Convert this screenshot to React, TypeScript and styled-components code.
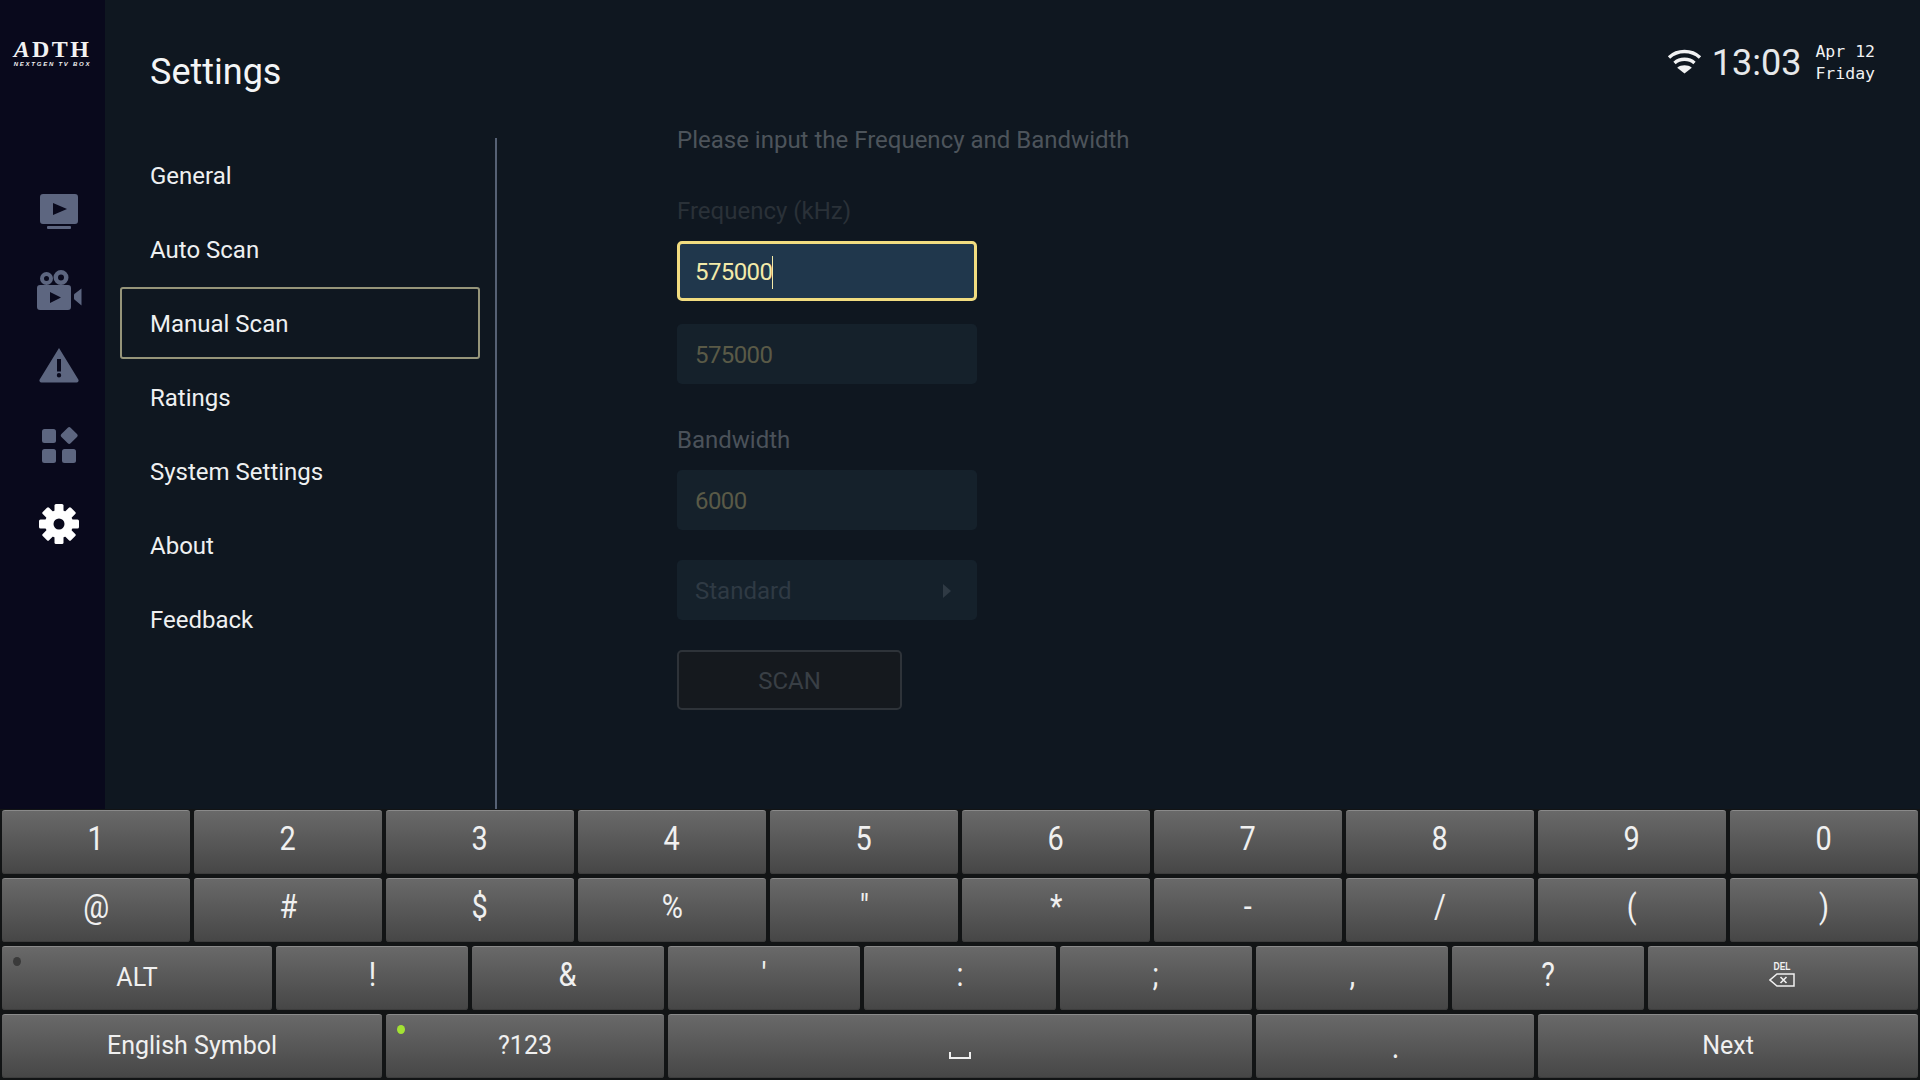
import React from "react";
import styled, { createGlobalStyle } from "styled-components";

const GlobalStyle = createGlobalStyle`
  html, body {
    margin: 0;
    padding: 0;
    background: #0f1720;
  }
  * {
    box-sizing: border-box;
  }
`;

const Page = styled.div`
  width: 1920px;
  height: 1080px;
  display: flex;
  flex-direction: column;
  overflow: hidden;
  background: #0f1720;
  font-family: Roboto, "Noto Sans", sans-serif;
`;

const Upper = styled.div`
  flex: 1;
  display: flex;
  min-height: 0;
`;

const Rail = styled.div`
  width: 105px;
  flex-shrink: 0;
  background: #09091c;
  padding-top: 41px;
  display: flex;
  flex-direction: column;
  align-items: center;
`;

const Logo = styled.div`
  width: 78px;
  margin-bottom: 105px;
  color: #f2f2f2;
  text-align: center;
`;

const LogoMark = styled.div`
  font-family: "Liberation Serif", serif;
  font-weight: 700;
  font-size: 24px;
  line-height: 16px;
  letter-spacing: 2.4px;
  white-space: nowrap;
`;

const LogoSlant = styled.span`
  font-style: italic;
`;

const LogoSub = styled.div`
  margin-top: 5px;
  font-family: "Liberation Sans", sans-serif;
  font-weight: 700;
  font-style: italic;
  font-size: 6px;
  line-height: 5px;
  letter-spacing: 1.75px;
  white-space: nowrap;
`;

const RailIcon = styled.div<{ $active?: boolean; $height: number }>`
  height: ${(p) => p.$height}px;
  width: 105px;
  padding-left: 13px;
  display: flex;
  align-items: center;
  justify-content: center;
  color: ${(p) => (p.$active ? "#ffffff" : "#5d6680")};
`;

const Main = styled.div`
  flex: 1;
  display: flex;
  flex-direction: column;
  min-width: 0;
`;

const Header = styled.div`
  height: 124px;
  flex-shrink: 0;
  padding: 41px 45px 0 45px;
  display: flex;
  justify-content: space-between;
  align-items: flex-start;
`;

const Title = styled.div`
  margin-top: 9px;
  font-size: 36px;
  line-height: 44px;
  color: #f4f5f6;
`;

const Status = styled.div`
  height: 44px;
  display: flex;
  align-items: center;
  color: #f1f2f3;
`;

const StatusWifi = styled.div`
  display: flex;
  margin-top: -5px;
`;

const Clock = styled.div`
  margin-left: 10px;
  font-size: 36px;
  line-height: 44px;
  color: #e6e8ea;
`;

const DateBox = styled.div`
  margin-left: 14px;
  font-family: "DejaVu Sans Mono", monospace;
  font-size: 16.5px;
  line-height: 22px;
`;

const Body = styled.div`
  flex: 1;
  display: flex;
  min-height: 0;
`;

const NavPane = styled.div`
  width: 392px;
  margin-top: 14px;
  padding: 1px 15px 0 15px;
  border-right: 2px solid #566174;
  display: flex;
  flex-direction: column;
  gap: 2px;
`;

const NavItem = styled.div<{ $focused?: boolean }>`
  height: 72px;
  padding: 2px 0 0 28px;
  display: flex;
  align-items: center;
  font-size: 24px;
  color: #eef0f1;
  border: 2px solid ${(p) => (p.$focused ? "#96957a" : "transparent")};
  border-radius: 3px;
`;

const Form = styled.div`
  margin-left: 180px;
  width: 300px;
  display: flex;
  flex-direction: column;
  align-items: flex-start;
`;

const Prompt = styled.div<{ $tone: string; $top: number }>`
  margin-top: ${(p) => p.$top}px;
  font-size: 24px;
  line-height: 32px;
  white-space: nowrap;
  color: ${(p) => p.$tone};
`;

const Field = styled.div<{ $top: number; $focused?: boolean }>`
  margin-top: ${(p) => p.$top}px;
  width: 300px;
  height: 60px;
  padding: 2px ${(p) => (p.$focused ? 15 : 18)}px 0;
  display: flex;
  align-items: center;
  font-size: 24px;
  letter-spacing: -0.6px;
  border-radius: 5px;
  background: ${(p) => (p.$focused ? "#20374c" : "#15212b")};
  border: ${(p) => (p.$focused ? "3px solid #f1dc80" : "none")};
  color: ${(p) => (p.$focused ? "#f3eaa9" : "#5a5a47")};
`;

const Caret = styled.span`
  width: 1px;
  height: 33px;
  background: #f3eaa9;
`;

const Dropdown = styled(Field)`
  justify-content: space-between;
  padding-right: 26px;
  letter-spacing: 0;
  color: #2f3a44;
`;

const ScanButton = styled.div`
  margin-top: 30px;
  width: 225px;
  height: 60px;
  padding-top: 2px;
  display: flex;
  align-items: center;
  justify-content: center;
  font-size: 24px;
  color: #393f45;
  background: #15191e;
  border: 2px solid #2e3339;
  border-radius: 5px;
`;

const Keyboard = styled.div`
  height: 271px;
  flex-shrink: 0;
  background: #121415;
  padding: 1px 2px 0;
  display: flex;
  flex-direction: column;
  gap: 4px;
`;

const KeyRow = styled.div`
  display: flex;
  gap: 4px;
`;

const Key = styled.div<{ $width: number; $lift?: number }>`
  position: relative;
  width: ${(p) => p.$width}px;
  height: 64px;
  flex-shrink: 0;
  padding-bottom: ${(p) => p.$lift ?? 2}px;
  display: flex;
  align-items: center;
  justify-content: center;
  color: #f0f0f0;
  border-radius: 3px;
  background: linear-gradient(#696969, #464646);
  border-top: 1px solid #8a8a8a;
  box-shadow: inset 0 -1px 0 #3d3d3d;
`;

const GlyphLabel = styled.span`
  display: inline-block;
  font-size: 34px;
  line-height: 1;
  white-space: nowrap;
  transform: scaleX(0.85);
`;

const WordLabel = styled.span`
  font-size: 25px;
  line-height: 1;
  white-space: nowrap;
`;

const KeyDot = styled.span<{ $color: string }>`
  position: absolute;
  left: 11px;
  top: 10px;
  width: 8px;
  height: 9px;
  border-radius: 50%;
  background: ${(p) => p.$color};
`;

const SpaceMark = styled.div`
  margin-top: 20px;
  display: flex;
`;

const DelBox = styled.div`
  display: flex;
  flex-direction: column;
  align-items: center;
  color: #f0f0f0;
  margin: 0 2px 6px 0;
`;

const DelText = styled.span`
  font-size: 10px;
  line-height: 11px;
  font-weight: 700;
  font-family: "Liberation Sans", sans-serif;
  transform: scaleX(0.85);
`;

const TvIcon = () => (
  <svg width="38" height="36" viewBox="0 0 38 36">
    <path
      fill="currentColor"
      fillRule="evenodd"
      d="M3 0h32a3 3 0 0 1 3 3v24a3 3 0 0 1-3 3H3a3 3 0 0 1-3-3V3a3 3 0 0 1 3-3zM13 9v12l14-6z"
    />
    <rect x="7" y="32" width="24" height="3" rx="1" fill="currentColor" />
  </svg>
);

const CameraIcon = () => (
  <svg width="45" height="40" viewBox="0 0 45 40">
    <path
      fill="currentColor"
      fillRule="evenodd"
      d="M3 15h28a3 3 0 0 1 3 3v19a3 3 0 0 1-3 3H3a3 3 0 0 1-3-3V18a3 3 0 0 1 3-3zM13 22v11l11-5.500z"
    />
    <path fill="currentColor" fillRule="evenodd" d="M9.500 2a6.500 6.500 0 1 1 0 13a6.500 6.500 0 0 1 0-13zM9.500 6a2.500 2.500 0 1 0 0 5a2.500 2.500 0 0 0 0-5z" />
    <path fill="currentColor" fillRule="evenodd" d="M24 0a7.500 7.500 0 1 1 0 15a7.500 7.500 0 0 1 0-15zM24 4.500a3 3 0 1 0 0 6a3 3 0 0 0 0-6z" />
    <path fill="currentColor" d="M44.500 18.500v17l-6.500-5.500a2 2 0 0 1-1-1.500v-3.500a2 2 0 0 1 1-1.500z" />
  </svg>
);

const WarningIcon = () => (
  <svg width="40" height="35" viewBox="0 0 40 35">
    <path
      fill="currentColor"
      fillRule="evenodd"
      d="M20 0l19.300 31.500a2 2 0 0 1-1.700 3H2.400a2 2 0 0 1-1.700-3zM18 11v12.500h4V11zM20 25a2.200 2.200 0 1 0 0 4.400a2.200 2.200 0 0 0 0-4.400z"
    />
  </svg>
);

const AppsIcon = () => (
  <svg width="38" height="38" viewBox="0 0 38 38">
    <g fill="currentColor">
      <rect x="2" y="3" width="14" height="14" rx="2.500" />
      <rect x="2" y="23" width="14" height="14" rx="2.500" />
      <rect x="22" y="23" width="14" height="14" rx="2.500" />
      <rect x="22.700" y="3" width="13" height="13" rx="2" transform="rotate(45 29.200 9.500)" />
    </g>
  </svg>
);

const GearIcon = () => (
  <svg width="40" height="40" viewBox="0 0 40 40">
    <g fill="#ffffff">
      {[0, 45, 90, 135].map((angle) => (
        <rect key={angle} x="15.500" y="0" width="9" height="40" rx="1.500" transform={`rotate(${angle} 20 20)`} />
      ))}
      <circle cx="20" cy="20" r="14" />
    </g>
    <circle cx="20" cy="20" r="5.500" fill="#09091c" />
  </svg>
);

const WifiIcon = () => (
  <svg width="35" height="26" viewBox="0 0 35 26">
    <g fill="none" stroke="currentColor" strokeWidth="3.400">
      <path d="M2 9.500C10.500 1.500 24.500 1.500 33 9.500" />
      <path d="M7.500 15C13 10 22 10 27.500 15" />
    </g>
    <path fill="currentColor" d="M17.500 25.500l-7.300-5.800c4-3.200 10.600-3.200 14.600 0z" />
  </svg>
);

const SpaceGlyph = () => (
  <svg width="22" height="7" viewBox="0 0 22 7">
    <path d="M1 0v6h20V0" fill="none" stroke="#f0f0f0" strokeWidth="2" />
  </svg>
);

const DelGlyph = () => (
  <svg width="26" height="16" viewBox="0 0 26 16">
    <path d="M25 2H8L1 8l7 6h17z" fill="none" stroke="#f0f0f0" strokeWidth="1.500" />
    <path d="M11.500 5l6 6M17.500 5l-6 6" fill="none" stroke="#f0f0f0" strokeWidth="1.600" />
  </svg>
);

const navItems = ["General", "Auto Scan", "Manual Scan", "Ratings", "System Settings", "About", "Feedback"];
const digits = ["1", "2", "3", "4", "5", "6", "7", "8", "9", "0"];
const symbols = ["@", "#", "$", "%", '"', "*", "-", "/", "(", ")"];
const punctuation = ["!", "&", "'", ":", ";", ",", "?"];

export default function App() {
  return (
    <Page>
      <GlobalStyle />
      <Upper>
        <Rail>
          <Logo>
            <LogoMark><LogoSlant>A</LogoSlant>DTH</LogoMark>
            <LogoSub>NEXTGEN TV BOX</LogoSub>
          </Logo>
          <RailIcon $height={80}><TvIcon /></RailIcon>
          <RailIcon $height={75}><CameraIcon /></RailIcon>
          <RailIcon $height={77}><WarningIcon /></RailIcon>
          <RailIcon $height={81}><AppsIcon /></RailIcon>
          <RailIcon $height={78} $active><GearIcon /></RailIcon>
        </Rail>
        <Main>
          <Header>
            <Title>Settings</Title>
            <Status>
              <StatusWifi><WifiIcon /></StatusWifi>
              <Clock>13:03</Clock>
              <DateBox>
                <div>Apr 12</div>
                <div>Friday</div>
              </DateBox>
            </Status>
          </Header>
          <Body>
            <NavPane>
              {navItems.map((item) => (
                <NavItem key={item} $focused={item === "Manual Scan"}>{item}</NavItem>
              ))}
            </NavPane>
            <Form>
              <Prompt $tone="#4d545b" $top={0}>Please input the Frequency and Bandwidth</Prompt>
              <Prompt $tone="#2a3138" $top={39}>Frequency (kHz)</Prompt>
              <Field $top={14} $focused>575000<Caret /></Field>
              <Field $top={23}>575000</Field>
              <Prompt $tone="#4b525a" $top={40}>Bandwidth</Prompt>
              <Field $top={14}>6000</Field>
              <Dropdown $top={30}>
                Standard
                <svg width="8" height="14" viewBox="0 0 8 14">
                  <path d="M0 0l8 7-8 7z" fill="#2f3a44" />
                </svg>
              </Dropdown>
              <ScanButton>SCAN</ScanButton>
            </Form>
          </Body>
        </Main>
      </Upper>
      <Keyboard>
        <KeyRow>
          {digits.map((k) => (
            <Key key={k} $width={188} $lift={10}><GlyphLabel>{k}</GlyphLabel></Key>
          ))}
        </KeyRow>
        <KeyRow>
          {symbols.map((k) => (
            <Key key={k} $width={188} $lift={10}><GlyphLabel>{k}</GlyphLabel></Key>
          ))}
        </KeyRow>
        <KeyRow>
          <Key $width={270}>
            <KeyDot $color="#3a3a3a" />
            <WordLabel>ALT</WordLabel>
          </Key>
          {punctuation.map((k) => (
            <Key key={k} $width={192} $lift={10}><GlyphLabel>{k}</GlyphLabel></Key>
          ))}
          <Key $width={270}>
            <DelBox>
              <DelText>DEL</DelText>
              <DelGlyph />
            </DelBox>
          </Key>
        </KeyRow>
        <KeyRow>
          <Key $width={380}><WordLabel>English Symbol</WordLabel></Key>
          <Key $width={278}>
            <KeyDot $color="#a3e233" />
            <WordLabel>?123</WordLabel>
          </Key>
          <Key $width={584}><SpaceMark><SpaceGlyph /></SpaceMark></Key>
          <Key $width={278}><GlyphLabel>.</GlyphLabel></Key>
          <Key $width={380}><WordLabel>Next</WordLabel></Key>
        </KeyRow>
      </Keyboard>
    </Page>
  );
}
